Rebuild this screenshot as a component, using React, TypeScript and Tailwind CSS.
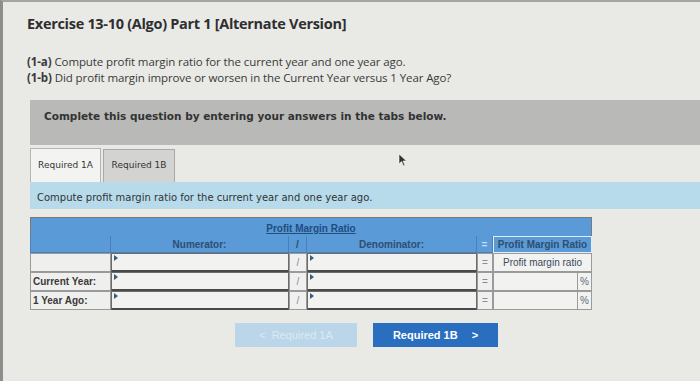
import React from 'react'

const cols = 'grid grid-cols-[81px_178px_18px_170px_16px_99px]'

function InputCell() {
  return (
    <div className="relative h-full border border-[#6b6b6b] border-b-2 border-b-[#4a4a4a] bg-[#f2f2f0]">
      <span className="absolute left-[2px] top-[1px] h-0 w-0 border-y-[3px] border-l-[4px] border-y-transparent border-l-[#3b5a80]" />
    </div>
  )
}

function Op({ s }: { s: string }) {
  return (
    <div className="flex h-full items-center justify-center border border-[#9a9a9a] bg-[#f0f0ee] text-[10px] text-[#7e8ea2]">
      {s}
    </div>
  )
}

function DataRow({ label, result }: { label: string; result?: string }) {
  return (
    <div className={`${cols} h-[19px]`}>
      <div className="flex items-center border border-[#9a9a9a] bg-[#efefed] pl-[2px] text-[10px] font-bold text-[#3a3a3a]">
        {label}
      </div>
      <InputCell />
      <Op s="/" />
      <InputCell />
      <Op s="=" />
      {result ? (
        <div className="flex items-center justify-center border border-[#9a9a9a] bg-[#f2f2f0] text-[10px] text-[#3a4a5c]">
          {result}
        </div>
      ) : (
        <div className="flex border border-[#9a9a9a] bg-[#f2f2f0]">
          <div className="flex-1" />
          <div className="flex w-[14px] items-center justify-center border-l border-[#9a9a9a] text-[10px] text-[#5b6b80]">%</div>
        </div>
      )}
    </div>
  )
}

export default function App() {
  return (
    <div className="relative h-[381px] w-[700px] overflow-hidden border-l-[3px] border-t-2 border-l-[#8d8d8b] border-t-[#a4a4a2] bg-[#e9e9e6] font-['Liberation_Sans',sans-serif]">
      <div className="pl-[24px] pt-[12px] font-['Open_Sans',sans-serif]">
        <h1 className="text-[14.5px] font-bold leading-[20px] tracking-[-0.3px] text-[#2f2f2f]">
          Exercise 13-10 (Algo) Part 1 [Alternate Version]
        </h1>
        <div className="mt-[20px] text-[11.5px] leading-[16px] tracking-[-0.1px] text-[#3a3a3a]">
          <p><b>(1-a)</b> Compute profit margin ratio for the current year and one year ago.</p>
          <p><b>(1-b)</b> Did profit margin improve or worsen in the Current Year versus 1 Year Ago?</p>
        </div>
      </div>

      <div className="ml-[27px] mt-[14px] font-['DejaVu_Sans',sans-serif]">
        <div className="h-[45px] bg-[#b9b9b7] pl-[14px] pt-[9px] text-[10.5px] font-bold leading-[14px] text-[#333]">
          Complete this question by entering your answers in the tabs below.
        </div>

        <div className="mt-[3px] flex items-end gap-[2px]">
          <div className="flex h-[34px] w-[71px] items-center justify-center border border-b-0 border-[#b5b5b3] bg-[#f3f3f1] text-[9px] text-[#333]">
            Required 1A
          </div>
          <div className="flex h-[33px] w-[72px] items-center justify-center border border-b-0 border-[#a9a9a7] bg-[#d3d3d1] text-[9px] text-[#333]">
            Required 1B
          </div>
        </div>

        <div className="flex h-[27px] items-center bg-[#b7dbeb] pl-[7px] pt-[3px] text-[10px] text-[#333]">
          Compute profit margin ratio for the current year and one year ago.
        </div>

        <div className="mt-[8px] w-[562px]">
          <div className="flex h-[19px] items-center justify-center border border-b-0 border-[#7a7a7a] bg-[#5a9ad7] pt-[3px] font-['Liberation_Sans',sans-serif] text-[10px] font-bold text-[#1f4d7e] underline">
            Profit Margin Ratio
          </div>
          <div className={`${cols} h-[17px] font-['Liberation_Sans',sans-serif] text-[10px] font-bold text-[#2e4e72]`}>
            <div className="border-b border-l border-r border-[#4c7fb3] bg-[#5a9ad7]" />
            <div className="flex items-center justify-center border-b border-r border-[#4c7fb3] bg-[#5a9ad7]">Numerator:</div>
            <div className="flex items-center justify-center border-b border-r border-[#4c7fb3] bg-[#5a9ad7]">/</div>
            <div className="flex items-center justify-center border-b border-r border-[#4c7fb3] bg-[#5a9ad7]">Denominator:</div>
            <div className="flex items-center justify-center border-b border-r border-[#4c7fb3] bg-[#5a9ad7] text-[#c9ddf2]">=</div>
            <div className="flex items-center justify-center border border-[#e4eef8] bg-[#5a9ad7]">Profit Margin Ratio</div>
          </div>
          <div className="font-['Liberation_Sans',sans-serif]">
            <DataRow label="" result="Profit margin ratio" />
            <DataRow label="Current Year:" />
            <DataRow label="1 Year Ago:" />
          </div>
        </div>

        <div className="ml-[205px] mt-[13px] flex items-center gap-[16px] font-['Liberation_Sans',sans-serif]">
          <div className="flex h-[24px] w-[122px] items-center justify-center gap-[6px] bg-[#bcd6e9] text-[11px] text-[#dce9f4]">
            <span>&lt;</span>
            <span>Required 1A</span>
          </div>
          <div className="flex h-[24px] w-[125px] items-center justify-center gap-[14px] bg-[#2a6fbf] text-[11px] font-bold text-white">
            <span>Required 1B</span>
            <span>&gt;</span>
          </div>
        </div>
      </div>

      <svg className="absolute left-[395px] top-[151px]" width="10" height="14" viewBox="0 0 10 14">
        <path d="M1 1 L1 11 L3.5 8.5 L5.5 13 L7 12.3 L5 8 L8.5 8 Z" fill="#333" stroke="#fff" strokeWidth="0.6" />
      </svg>
    </div>
  )
}
